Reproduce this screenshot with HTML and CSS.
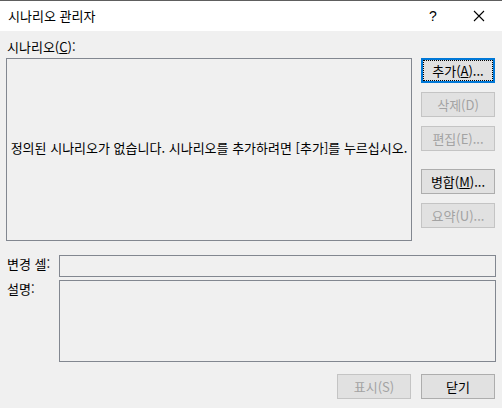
FILE: index.html
```html
<!DOCTYPE html>
<html lang="ko">
  <head>
    <meta charset="UTF-8" />
    <title>시나리오 관리자</title>
    <link rel="stylesheet" href="styles.css">
  </head>
  <body>
    <div class="dialog">
      <div class="titlebar">
        <span class="title">시나리오 관리자</span>
        <span class="help">?</span>
        <span class="close">
          <svg width="12" height="12" viewBox="0 0 12 12">
            <path d="M1 1 L11 11 M11 1 L1 11" stroke="#000" stroke-width="1.1" fill="none" />
          </svg>
        </span>
      </div>

      <div class="content">
        <div class="scenario-label">시나리오(<u>C</u>):</div>
        <div class="main">
          <div class="listbox">
            <span class="empty-msg">정의된 시나리오가 없습니다. 시나리오를 추가하려면 [추가]를 누르십시오.</span>
          </div>
          <div class="side-buttons">
            <button class="btn focused"><span class="focus-ring">추가(<u>A</u>)...</span></button>
            <button class="btn" disabled>삭제(D)</button>
            <button class="btn" disabled>편집(E)...</button>
            <button class="btn spaced">병합(<u>M</u>)...</button>
            <button class="btn" disabled>요약(U)...</button>
          </div>
        </div>

        <div class="field-row">
          <label class="field-label">변경 셀:</label>
          <div class="field-box single"></div>
        </div>
        <div class="field-row desc">
          <label class="field-label">설명:</label>
          <div class="field-box multi"></div>
        </div>

        <div class="footer">
          <button class="btn" disabled>표시(S)</button>
          <button class="btn">닫기</button>
        </div>
      </div>
    </div>
  </body>
</html>
```

FILE: styles.css
```css
body {
  margin: 0;
  background-color: #f0f0f0;
  font-family: "Noto Sans CJK KR", "Noto Sans", sans-serif;
  font-size: 13px;
  color: #000;
  overflow: hidden;
}
.dialog {
  width: 502px;
  height: 408px;
  border-top: 1px solid #5e5e5e;
  box-sizing: border-box;
}
.titlebar {
  height: 30px;
  background: #fff;
  display: flex;
  align-items: center;
}
.title {
  flex: 1;
  padding-left: 8px;
  line-height: 16px;
}
.help {
  width: 14px;
  text-align: center;
  font-family: "Liberation Sans", sans-serif;
  font-size: 14px;
  margin-right: 33px;
}
.close {
  width: 12px;
  height: 12px;
  margin-right: 17px;
  display: flex;
}
.content {
  padding: 8px 6px 0 6px;
}
.scenario-label {
  line-height: 16px;
  height: 16px;
  padding-left: 1px;
  margin-bottom: 3px;
}
.main {
  display: flex;
}
.listbox {
  width: 406px;
  height: 183px;
  box-sizing: border-box;
  border: 1px solid #828790;
  display: flex;
  align-items: center;
  justify-content: center;
  overflow: hidden;
}
.empty-msg {
  white-space: nowrap;
  line-height: 16px;
  margin-top: -4px;
}
.side-buttons {
  margin-left: 9px;
  display: flex;
  flex-direction: column;
  gap: 9px;
}
.btn {
  width: 74px;
  height: 25px;
  box-sizing: border-box;
  background: #e1e1e1;
  border: 1px solid #adadad;
  font-family: inherit;
  font-size: 13px;
  color: #000;
  padding: 0;
  line-height: 16px;
}
.btn:disabled {
  background: #e1e1e1;
  border-color: #c4c4c4;
  color: #a3a3a3;
}
.btn.focused {
  border: 2px solid #0078d7;
  padding: 1px;
}
.focus-ring {
  display: flex;
  align-items: center;
  justify-content: center;
  height: 100%;
  outline: 1px dotted #000;
}
.btn.spaced {
  margin-top: 9px;
}
.field-row {
  display: flex;
  margin-top: 14px;
}
.field-row.desc {
  margin-top: 3px;
}
.field-label {
  width: 52px;
  padding-left: 1px;
  line-height: 16px;
  padding-top: 1px;
}
.field-box {
  flex: 1;
  box-sizing: border-box;
  border: 1px solid #828790;
}
.field-box.single {
  height: 22px;
}
.field-box.multi {
  height: 82px;
}
.footer {
  display: flex;
  justify-content: flex-end;
  gap: 10px;
  margin-top: 12px;
  padding-right: 1px;
}
```
